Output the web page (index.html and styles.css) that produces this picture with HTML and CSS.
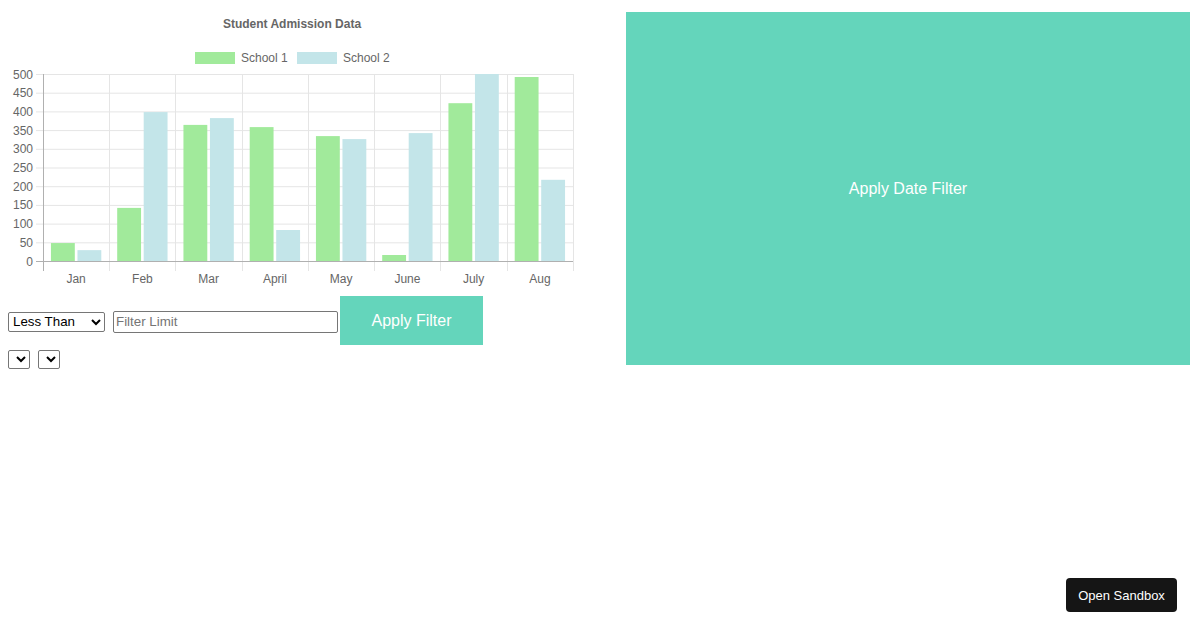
FILE: index.html
```html
<!DOCTYPE html>
<html>
<head>
<meta charset="utf-8">
<link rel="stylesheet" href="styles.css">
</head>
<body>
<div class="page">
  <div class="left">
    <svg class="chart" width="576" height="288" viewBox="8 8 576 288" xmlns="http://www.w3.org/2000/svg">
      <text x="292" y="28" class="title" text-anchor="middle">Student Admission Data</text>
      <rect x="195" y="52" width="40" height="12" fill="#a1ea9b"/>
      <text x="241" y="62" class="lbl">School 1</text>
      <rect x="297" y="52" width="40" height="12" fill="#c3e5e9"/>
      <text x="343" y="62" class="lbl">School 2</text>
      <g stroke="#e5e5e5" stroke-width="1">
        <line x1="36" y1="74.5" x2="573" y2="74.5"/>
        <line x1="36" y1="93.2" x2="573" y2="93.2"/>
        <line x1="36" y1="111.9" x2="573" y2="111.9"/>
        <line x1="36" y1="130.6" x2="573" y2="130.6"/>
        <line x1="36" y1="149.3" x2="573" y2="149.3"/>
        <line x1="36" y1="168" x2="573" y2="168"/>
        <line x1="36" y1="186.7" x2="573" y2="186.7"/>
        <line x1="36" y1="205.4" x2="573" y2="205.4"/>
        <line x1="36" y1="224.1" x2="573" y2="224.1"/>
        <line x1="36" y1="242.8" x2="573" y2="242.8"/>
        <line x1="109.5" y1="74" x2="109.5" y2="271"/>
        <line x1="175.5" y1="74" x2="175.5" y2="271"/>
        <line x1="242.5" y1="74" x2="242.5" y2="271"/>
        <line x1="308.5" y1="74" x2="308.5" y2="271"/>
        <line x1="374.5" y1="74" x2="374.5" y2="271"/>
        <line x1="440.5" y1="74" x2="440.5" y2="271"/>
        <line x1="507.5" y1="74" x2="507.5" y2="271"/>
        <line x1="573.5" y1="74" x2="573.5" y2="271"/>
      </g>
      <g class="bars">
        <rect x="50.95" y="243.05" width="23.85" height="17.95" fill="#a1ea9b"/>
        <rect x="77.45" y="250.15" width="23.85" height="10.85" fill="#c3e5e9"/>
        <rect x="117.2" y="207.9" width="23.85" height="53.1" fill="#a1ea9b"/>
        <rect x="143.7" y="112.1" width="23.85" height="148.9" fill="#c3e5e9"/>
        <rect x="183.45" y="124.9" width="23.85" height="136.1" fill="#a1ea9b"/>
        <rect x="209.95" y="118.1" width="23.85" height="142.9" fill="#c3e5e9"/>
        <rect x="249.7" y="127.1" width="23.85" height="133.9" fill="#a1ea9b"/>
        <rect x="276.2" y="230" width="23.85" height="31" fill="#c3e5e9"/>
        <rect x="315.95" y="136.1" width="23.85" height="124.9" fill="#a1ea9b"/>
        <rect x="342.45" y="139.1" width="23.85" height="121.9" fill="#c3e5e9"/>
        <rect x="382.2" y="255" width="23.85" height="6" fill="#a1ea9b"/>
        <rect x="408.7" y="133.1" width="23.85" height="127.9" fill="#c3e5e9"/>
        <rect x="448.45" y="103.2" width="23.85" height="157.8" fill="#a1ea9b"/>
        <rect x="474.95" y="74" width="23.85" height="187" fill="#c3e5e9"/>
        <rect x="514.7" y="77" width="23.85" height="184" fill="#a1ea9b"/>
        <rect x="541.2" y="179.8" width="23.85" height="81.2" fill="#c3e5e9"/>
      </g>
      <g stroke="#b0b0b0" stroke-width="1">
        <line x1="43.5" y1="74" x2="43.5" y2="271"/>
        <line x1="36" y1="261.5" x2="573" y2="261.5"/>
      </g>
      <g class="lbl" text-anchor="end">
        <text x="33" y="78.5">500</text>
        <text x="33" y="97.2">450</text>
        <text x="33" y="115.9">400</text>
        <text x="33" y="134.6">350</text>
        <text x="33" y="153.3">300</text>
        <text x="33" y="172">250</text>
        <text x="33" y="190.7">200</text>
        <text x="33" y="209.4">150</text>
        <text x="33" y="228.1">100</text>
        <text x="33" y="246.8">50</text>
        <text x="33" y="265.5">0</text>
      </g>
      <g class="lbl" text-anchor="middle">
        <text x="76.1" y="283">Jan</text>
        <text x="142.4" y="283">Feb</text>
        <text x="208.6" y="283">Mar</text>
        <text x="274.9" y="283">April</text>
        <text x="341.1" y="283">May</text>
        <text x="407.4" y="283">June</text>
        <text x="473.6" y="283">July</text>
        <text x="539.9" y="283">Aug</text>
      </g>
    </svg>
    <div class="filter-row">
      <select class="op-select">
        <option>Less Than</option>
        <option>Greater Than</option>
      </select>
      <input class="limit" type="text" placeholder="Filter Limit">
      <button class="apply">Apply Filter</button>
    </div>
    <div class="date-row">
      <select class="small-select"><option></option></select>
      <select class="small-select"><option></option></select>
    </div>
  </div>
  <div class="date-box">Apply Date Filter</div>
</div>
<button class="sandbox">Open Sandbox</button>
</body>
</html>
```

FILE: styles.css
```css
html, body {
  margin: 0;
  padding: 0;
  background: #ffffff;
}
body {
  margin: 8px;
  font-family: "Liberation Sans", Arial, sans-serif;
}
.page {
  display: flex;
  align-items: flex-start;
}
.left {
  width: 618px;
  flex: none;
}
.chart {
  display: block;
}
.chart .title {
  font-family: "Liberation Sans", Arial, sans-serif;
  font-size: 12px;
  font-weight: bold;
  fill: #666666;
}
.chart .lbl, .chart .lbl text {
  font-family: "Liberation Sans", Arial, sans-serif;
  font-size: 12px;
  fill: #666666;
}
.filter-row {
  display: flex;
  align-items: center;
  height: 49px;
}
.op-select {
  width: 97px;
  height: 20px;
  font-family: "Liberation Sans", Arial, sans-serif;
  font-size: 13.33px;
  margin: 0 8px 0 0;
  padding: 0;
  border: 1px solid #767676;
  border-radius: 2px;
  background: #fff;
  color: #000;
  margin-top: 2px;
}
.limit {
  box-sizing: border-box;
  width: 225px;
  height: 22px;
  margin: 2px 2px 0 0;
  padding: 1px 2px;
  font-family: "Liberation Sans", Arial, sans-serif;
  font-size: 13.33px;
  border: 1px solid #767676;
  border-radius: 2px;
}
.limit::placeholder {
  color: #757575;
}
.apply {
  width: 143px;
  height: 49px;
  margin: 0;
  border: none;
  background: #64d5bb;
  color: #ffffff;
  font-family: "Liberation Sans", Arial, sans-serif;
  font-size: 16px;
  padding: 0;
}
.date-row {
  display: flex;
  gap: 8px;
  margin-top: 5px;
}
.small-select {
  width: 22px;
  height: 19px;
  padding: 0;
  margin: 0;
  border: 1px solid #767676;
  border-radius: 2px;
  background: #fff;
  font-size: 13.33px;
}
.date-box {
  width: 564px;
  height: 353px;
  margin-top: 4px;
  background: #64d5bb;
  color: #ffffff;
  font-family: "Liberation Sans", Arial, sans-serif;
  font-size: 16px;
  display: flex;
  align-items: center;
  justify-content: center;
  flex: none;
}
.sandbox {
  position: fixed;
  right: 23px;
  bottom: 18px;
  width: 111px;
  height: 34px;
  background: #151515;
  color: #ffffff;
  border: none;
  border-radius: 4px;
  font-family: "Liberation Sans", Arial, sans-serif;
  font-size: 13px;
  padding: 0;
}
```
